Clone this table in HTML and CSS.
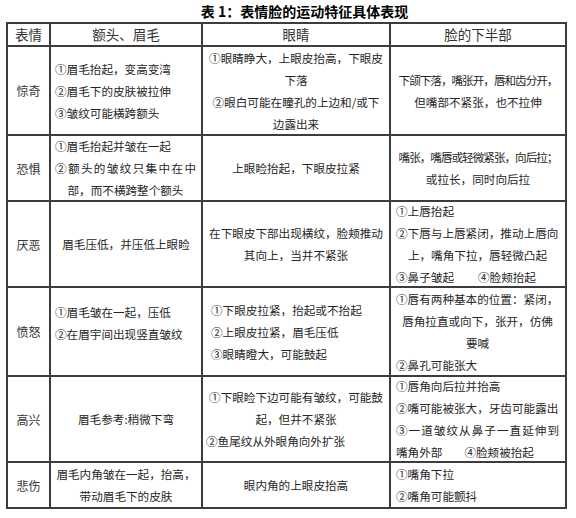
FILE: index.html
```html
<!DOCTYPE html>
<html lang="zh-CN">
<head>
<meta charset="utf-8">
<title>表情脸的运动特征具体表现</title>
<link rel="stylesheet" href="styles.css">
</head>
<body>
<div class="page">
  <div class="title">表 1：表情脸的运动特征具体表现</div>
  <div class="table">
    <div class="cell head">表情</div>
    <div class="cell head">额头、眉毛</div>
    <div class="cell head">眼睛</div>
    <div class="cell head">脸的下半部</div>

    <div class="cell label">惊奇</div>
    <div class="cell pad4">
      <div class="ln">①眉毛抬起，变高变湾</div>
      <div class="ln">②眉毛下的皮肤被拉伸</div>
      <div class="ln">③皱纹可能横跨额头</div>
    </div>
    <div class="cell">
      <div class="ln c">①眼睛睁大，上眼皮抬高，下眼皮</div>
      <div class="ln c">下落</div>
      <div class="ln c">②眼白可能在瞳孔的上边和/或下</div>
      <div class="ln c">边露出来</div>
    </div>
    <div class="cell">
      <div class="ln c tight">下颌下落，嘴张开，唇和齿分开，</div>
      <div class="ln c">但嘴部不紧张，也不拉伸</div>
    </div>

    <div class="cell label">恐惧</div>
    <div class="cell pad4">
      <div class="ln">①眉毛抬起并皱在一起</div>
      <div class="ln j">②额头的皱纹只集中在中</div>
      <div class="ln c">部，而不横跨整个额头</div>
    </div>
    <div class="cell">
      <div class="ln c">上眼睑抬起，下眼皮拉紧</div>
    </div>
    <div class="cell">
      <div class="ln c tight">嘴张，嘴唇或轻微紧张，向后拉；</div>
      <div class="ln c">或拉长，同时向后拉</div>
    </div>

    <div class="cell label">厌恶</div>
    <div class="cell">
      <div class="ln c">眉毛压低，并压低上眼睑</div>
    </div>
    <div class="cell">
      <div class="ln c">在下眼皮下部出现横纹，脸颊推动</div>
      <div class="ln c">其向上，当并不紧张</div>
    </div>
    <div class="cell pad5">
      <div class="ln">①上唇抬起</div>
      <div class="ln">②下唇与上唇紧闭，推动上唇向</div>
      <div class="ln c">上，嘴角下拉，唇轻微凸起</div>
      <div class="ln pair"><span>③鼻子皱起</span><span>④脸颊抬起</span></div>
    </div>

    <div class="cell label">愤怒</div>
    <div class="cell pad4 top">
      <div class="ln">①眉毛皱在一起，压低</div>
      <div class="ln">②在眉宇间出现竖直皱纹</div>
    </div>
    <div class="cell pad8">
      <div class="ln">①下眼皮拉紧，抬起或不抬起</div>
      <div class="ln">②上眼皮拉紧，眉毛压低</div>
      <div class="ln">③眼睛瞪大，可能鼓起</div>
    </div>
    <div class="cell pad5">
      <div class="ln">①唇有两种基本的位置：紧闭，</div>
      <div class="ln c">唇角拉直或向下，张开，仿佛</div>
      <div class="ln c">要喊</div>
      <div class="ln">②鼻孔可能张大</div>
    </div>

    <div class="cell label">高兴</div>
    <div class="cell">
      <div class="ln c">眉毛参考:稍微下弯</div>
    </div>
    <div class="cell pad3">
      <div class="ln c">①下眼睑下边可能有皱纹，可能鼓</div>
      <div class="ln c">起，但并不紧张</div>
      <div class="ln">②鱼尾纹从外眼角向外扩张</div>
    </div>
    <div class="cell pad5">
      <div class="ln">①唇角向后拉并抬高</div>
      <div class="ln">②嘴可能被张大，牙齿可能露出</div>
      <div class="ln j">③一道皱纹从鼻子一直延伸到</div>
      <div class="ln pair2"><span>嘴角外部</span><span>④脸颊被抬起</span></div>
    </div>

    <div class="cell label">悲伤</div>
    <div class="cell">
      <div class="ln c">眉毛内角皱在一起，抬高，</div>
      <div class="ln c">带动眉毛下的皮肤</div>
    </div>
    <div class="cell">
      <div class="ln c">眼内角的上眼皮抬高</div>
    </div>
    <div class="cell pad5">
      <div class="ln">①嘴角下拉</div>
      <div class="ln">②嘴角可能颤抖</div>
    </div>
  </div>
</div>
</body>
</html>
```

FILE: styles.css
```css
html, body {
  margin: 0;
  padding: 0;
  background: #ffffff;
}

body {
  font-family: "Noto Sans CJK SC", "Noto Sans", sans-serif;
  color: #262626;
}

.page {
  width: 576px;
  height: 518px;
}

.title {
  margin-left: 6px;
  width: 561px;
  box-sizing: border-box;
  padding-left: 36px;
  height: 22px;
  line-height: 23px;
  text-align: center;
  font-size: 14px;
  font-weight: 700;
  color: #000;
}

.table {
  margin-left: 6px;
  display: grid;
  grid-template-columns: 41px 150px 186px 174px;
  grid-template-rows: 21px 87px 64px 84px 87px 84px 44px;
  gap: 2px;
  padding: 2px;
  width: max-content;
  background: #3c3c3c;
}

.cell {
  background: #fff;
  display: flex;
  flex-direction: column;
  justify-content: center;
  font-size: 11.6px;
  min-width: 0;
}

.head {
  font-size: 13.5px;
  color: #333;
  align-items: center;
  line-height: 21px;
}

.label {
  align-items: center;
  font-size: 12px;
  color: #333;
}

.ln {
  line-height: 22px;
  white-space: nowrap;
}

.c {
  text-align: center;
}

.tight {
  letter-spacing: -1px;
}

.j {
  text-align: justify;
  text-align-last: justify;
}

.pad3 { padding-left: 3px; padding-right: 3px; }
.pad4 { padding-left: 4px; padding-right: 5px; }
.pad5 { padding-left: 5px; padding-right: 6px; }
.pad8 { padding-left: 8px; }

.top {
  justify-content: flex-start;
  padding-top: 13px;
}

.pair {
  display: flex;
  gap: 24px;
}

.pair2 {
  display: flex;
  gap: 22px;
}
```
